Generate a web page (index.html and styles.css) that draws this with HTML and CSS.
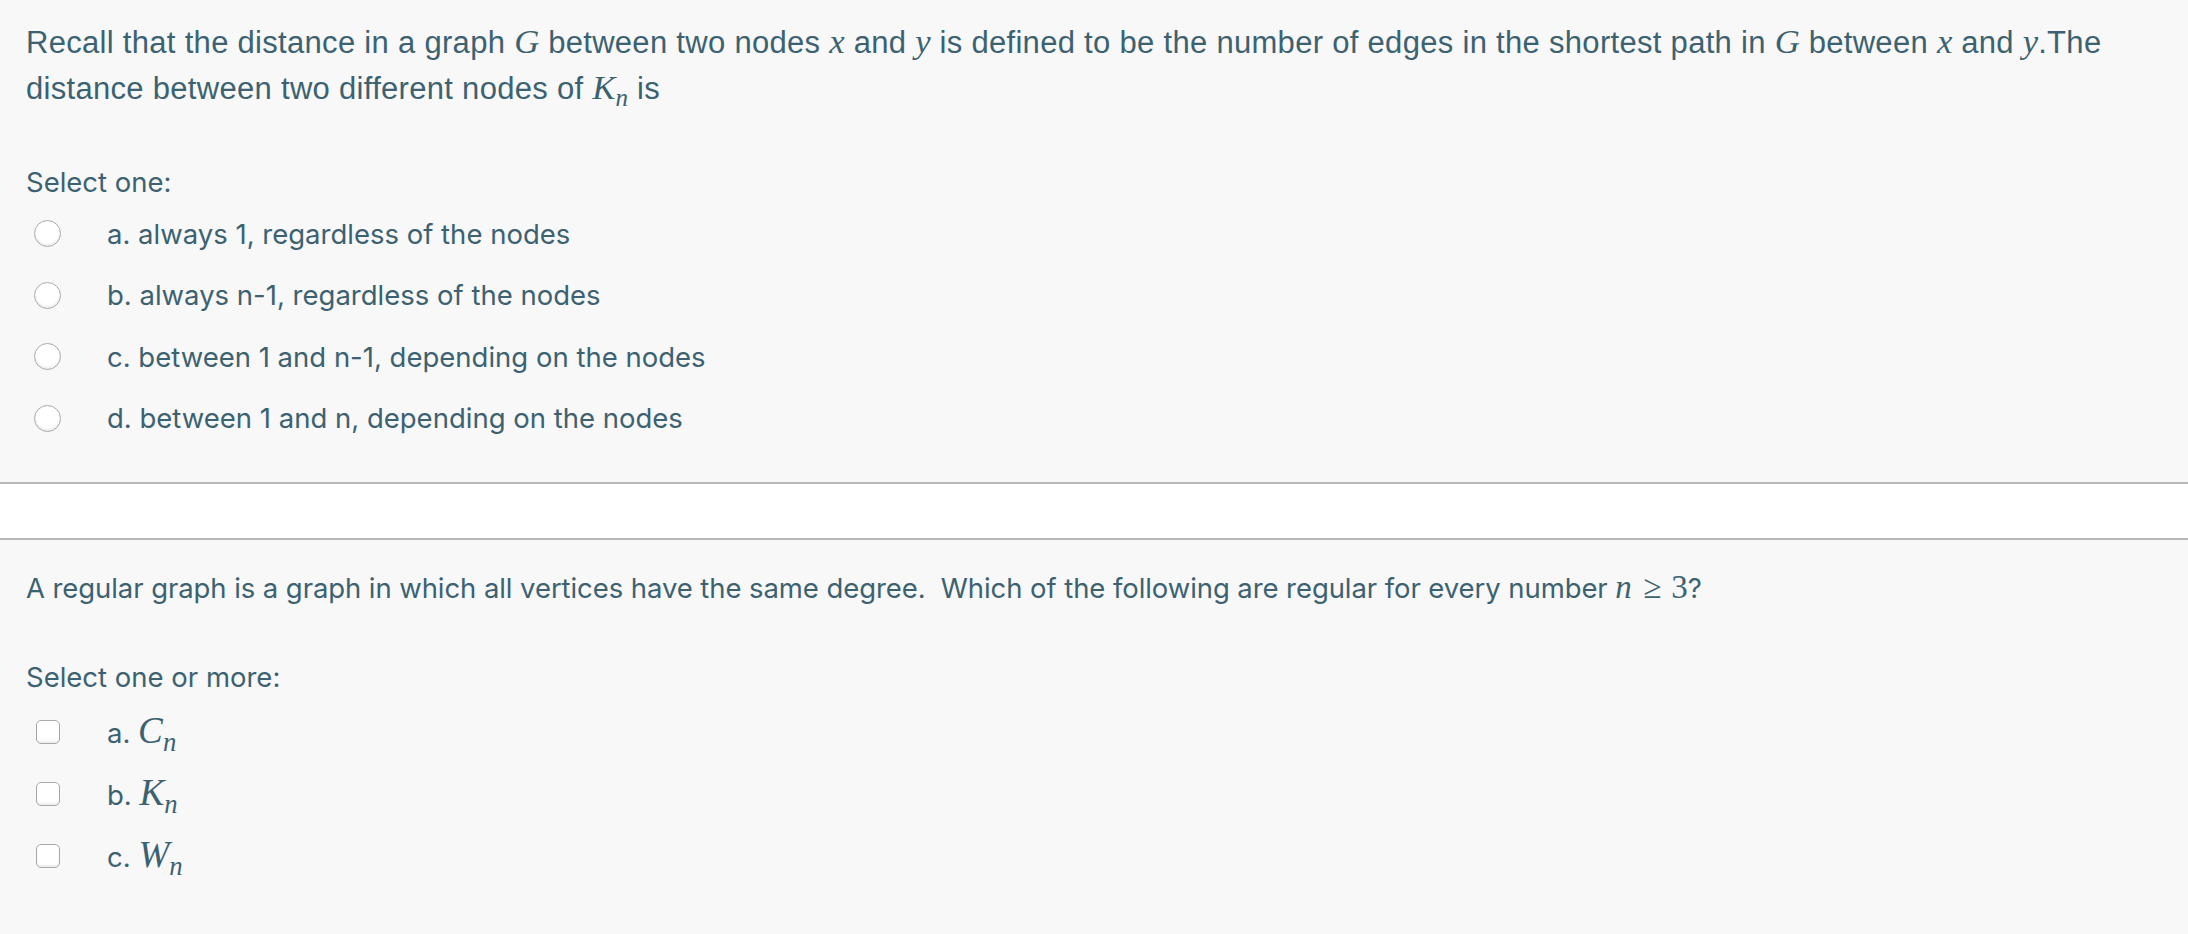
FILE: index.html
```html
<!DOCTYPE html>
<html lang="en">
<head>
<meta charset="utf-8">
<title>Quiz</title>
<link rel="stylesheet" href="styles.css">
</head>
<body>
<section class="que que-first">
  <div class="qtext">Recall that the distance in a graph <span class="m">G</span> between two nodes <span class="m">x</span> and <span class="m">y</span> is defined to be the number of edges in the shortest path in <span class="m">G</span> between <span class="m">x</span> and <span class="m">y</span>.The distance between two different nodes of <span class="m">K<sub class="sub">n</sub></span> is</div>
  <div class="prompt">Select one:</div>
  <div class="answers">
    <label class="opt"><span class="radio"></span><span class="lbl">a. always 1, regardless of the nodes</span></label>
    <label class="opt"><span class="radio"></span><span class="lbl">b. always n-1, regardless of the nodes</span></label>
    <label class="opt"><span class="radio"></span><span class="lbl">c. between 1 and n-1, depending on the nodes</span></label>
    <label class="opt"><span class="radio"></span><span class="lbl">d. between 1 and n, depending on the nodes</span></label>
  </div>
</section>
<div class="separator"></div>
<section class="que que-second">
  <div class="qtext2">A regular graph is a graph in which all vertices have the same degree.&nbsp; Which of the following are regular for every number <span class="m2">n</span><span class="rel">≥</span><span class="num">3</span>?</div>
  <div class="prompt prompt2">Select one or more:</div>
  <div class="answers answers2">
    <label class="opt opt2"><span class="check"></span><span class="lbl">a. <span class="m3">C<sub class="sub">n</sub></span></span></label>
    <label class="opt opt2"><span class="check"></span><span class="lbl">b. <span class="m3">K<sub class="sub">n</sub></span></span></label>
    <label class="opt opt2"><span class="check"></span><span class="lbl">c. <span class="m3">W<sub class="sub">n</sub></span></span></label>
  </div>
</section>
</body>
</html>
```
FILE: styles.css
```css
html, body {
  margin: 0;
  padding: 0;
}
body {
  background: #f8f8f8;
  color: #3c6271;
  width: 2188px;
  height: 934px;
  overflow: hidden;
}
.que {
  box-sizing: border-box;
  padding: 20px 26px 0 26px;
}
.que-first {
  height: 484px;
  border-bottom: 2px solid #b8b8b8;
}
.separator {
  height: 54px;
  background: #ffffff;
  border-bottom: 2px solid #b8b8b8;
}
.qtext {
  font-family: "Liberation Sans", Arial, sans-serif;
  font-size: 31px;
  line-height: 46px;
  letter-spacing: 0.3px;
}
.m, .m2, .m3 {
  font-family: "Liberation Serif", "Times New Roman", serif;
  font-style: italic;
  font-size: 1.12em;
  letter-spacing: 0;
  line-height: 1;
}
.sub {
  font-size: 0.72em;
  vertical-align: baseline;
  position: relative;
  top: 0.3em;
  line-height: 1;
}
.prompt {
  font-family: Inter, "Noto Sans", sans-serif;
  font-size: 27.5px;
  line-height: 40px;
  margin-top: 50px;
}
.answers {
  margin-top: 1px;
}
.opt {
  display: flex;
  align-items: center;
  height: 61.5px;
  font-family: Inter, "Noto Sans", sans-serif;
  font-size: 27.5px;
  line-height: 40px;
}
.radio {
  box-sizing: border-box;
  width: 27px;
  height: 27px;
  border-radius: 50%;
  border: 1.5px solid #a9a9a9;
  background: #ffffff;
  box-shadow: inset 0 -2px 2px rgba(0,0,0,0.07);
  margin-left: 8px;
  margin-right: 46px;
  flex: none;
}
.que-second {
  padding-top: 28px;
}
.qtext2 {
  font-family: Inter, "Noto Sans", sans-serif;
  font-size: 27.5px;
  line-height: 40px;
  letter-spacing: -0.08px;
}
.m2 {
  font-size: 1.2em;
}
.rel, .num {
  font-family: "Liberation Serif", "Times New Roman", serif;
  font-size: 1.2em;
  line-height: 1;
}
.rel {
  margin: 0 0.3em 0 0.35em;
}
.prompt2 {
  margin-top: 49px;
}
.answers2 {
  margin-top: 4px;
}
.opt2 {
  height: 62px;
}
.check {
  box-sizing: border-box;
  width: 24px;
  height: 24px;
  border-radius: 5px;
  border: 1.5px solid #a9a9a9;
  background: #ffffff;
  box-shadow: inset 0 -2px 2px rgba(0,0,0,0.07);
  margin-left: 10px;
  margin-right: 47px;
  flex: none;
}
.m3 {
  font-size: 1.35em;
}
```
